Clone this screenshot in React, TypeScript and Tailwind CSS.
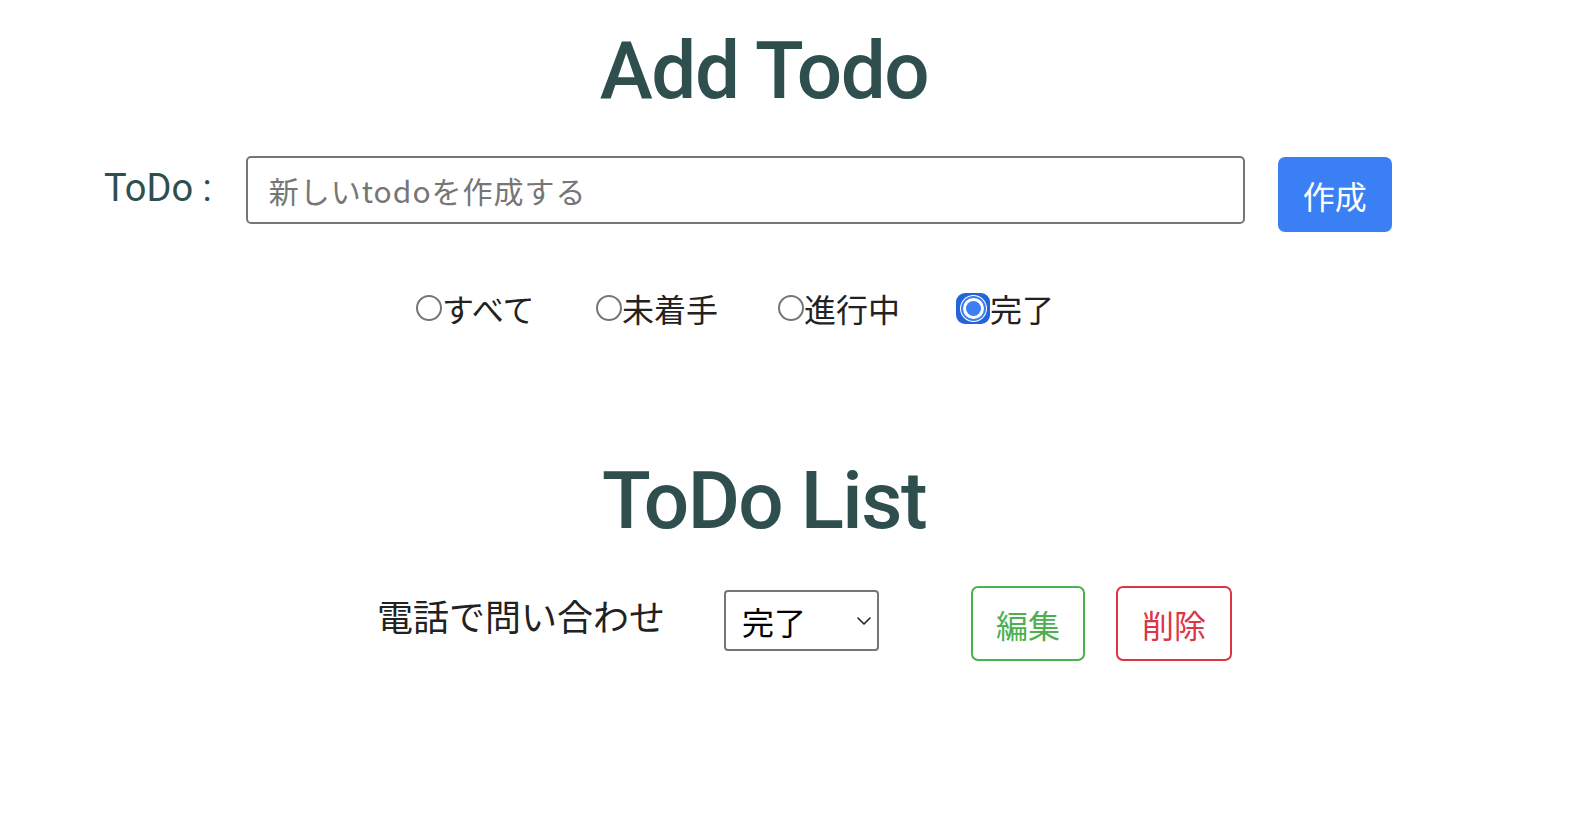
import React from "react";

function Radio({ label, checked, width }: { label: string; checked?: boolean; width: string }) {
  return (
    <label className={`flex items-center ${width}`}>
      {checked ? (
        <span className="flex h-[31px] w-[34px] items-center justify-center rounded-[9px] bg-[#2563d8]">
          <span className="flex h-[27px] w-[27px] items-center justify-center rounded-full bg-white">
            <span className="flex h-[25px] w-[25px] items-center justify-center rounded-full bg-[#3b7ff5]">
              <span className="flex h-[21px] w-[21px] items-center justify-center rounded-full bg-white">
                <span className="h-[15px] w-[15px] rounded-full bg-[#3b7ff5]" />
              </span>
            </span>
          </span>
        </span>
      ) : (
        <span className="h-[26px] w-[26px] rounded-full border-[2px] border-[#767676] bg-white" />
      )}
      <span className="text-[32px] leading-none text-[#222] font-['Noto_Sans_CJK_JP',sans-serif]">{label}</span>
    </label>
  );
}

export default function App() {
  return (
    <div className="w-[1592px] h-[838px] bg-white overflow-hidden font-['Roboto','Noto_Sans_CJK_JP',sans-serif]">
      <div className="w-[1528px] pt-[31px] text-center">
        <h1 className="text-[80px] leading-[80px] font-medium tracking-[-1.5px] text-[#2f4f4f]">Add Todo</h1>
      </div>

      <div className="mt-[45px] flex items-start pl-[104px]">
        <span className="mt-[12px] text-[38px] leading-[40px] text-[#2f4f4f]">ToDo :</span>
        <div className="ml-[34px] flex h-[68px] w-[999px] items-center rounded-[5px] border-[2px] border-[#767676] bg-white pl-[21px]">
          <span className="text-[30px] tracking-[1px] text-[#767676] font-['Noto_Sans_CJK_JP',sans-serif]">新しいtodoを作成する</span>
        </div>
        <button className="ml-[33px] mt-[1px] flex h-[75px] w-[114px] items-center justify-center rounded-[7px] bg-[#3b7ff5] text-[32px] text-white font-['Noto_Sans_CJK_JP',sans-serif]">
          作成
        </button>
      </div>

      <div className="mt-[60px] flex items-center pl-[416px]">
        <Radio label="すべて" width="w-[180px]" />
        <Radio label="未着手" width="w-[182px]" />
        <Radio label="進行中" width="w-[178px]" />
        <Radio label="完了" checked width="w-[100px]" />
      </div>

      <div className="w-[1528px] pt-[137px] text-center">
        <h2 className="text-[80px] leading-[80px] font-medium tracking-[-1.5px] text-[#2f4f4f]">ToDo List</h2>
      </div>

      <div className="mt-[45px] flex items-start pl-[377px]">
        <span className="mt-[11px] w-[347px] text-[36px] leading-[36px] text-[#222] font-['Noto_Sans_CJK_JP',sans-serif]">電話で問い合わせ</span>
        <div className="mt-[4px] flex h-[61px] w-[155px] items-center justify-between rounded-[4px] border-[2px] border-[#767676] bg-white pl-[16px] pr-[5px]">
          <span className="text-[32px] text-black font-['Noto_Sans_CJK_JP',sans-serif]">完了</span>
          <svg width="16" height="10" viewBox="0 0 16 10" fill="none">
            <path d="M2 2 L8 8 L14 2" stroke="#222" strokeWidth="1.6" strokeLinecap="round" strokeLinejoin="round" />
          </svg>
        </div>
        <button className="ml-[92px] flex h-[75px] w-[114px] items-center justify-center rounded-[7px] border-[2px] border-[#4caf50] bg-white text-[32px] text-[#4caf50] font-['Noto_Sans_CJK_JP',sans-serif]">
          編集
        </button>
        <button className="ml-[31px] flex h-[75px] w-[116px] items-center justify-center rounded-[7px] border-[2px] border-[#dc3545] bg-white text-[32px] text-[#dc3545] font-['Noto_Sans_CJK_JP',sans-serif]">
          削除
        </button>
      </div>
    </div>
  );
}
